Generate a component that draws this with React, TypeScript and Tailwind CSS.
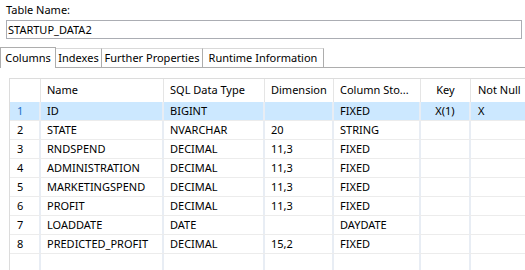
const columns = [
  { id: 1, name: 'ID', type: 'BIGINT', dim: '', store: 'FIXED', key: 'X(1)', notNull: 'X' },
  { id: 2, name: 'STATE', type: 'NVARCHAR', dim: '20', store: 'STRING', key: '', notNull: '' },
  { id: 3, name: 'RNDSPEND', type: 'DECIMAL', dim: '11,3', store: 'FIXED', key: '', notNull: '' },
  { id: 4, name: 'ADMINISTRATION', type: 'DECIMAL', dim: '11,3', store: 'FIXED', key: '', notNull: '' },
  { id: 5, name: 'MARKETINGSPEND', type: 'DECIMAL', dim: '11,3', store: 'FIXED', key: '', notNull: '' },
  { id: 6, name: 'PROFIT', type: 'DECIMAL', dim: '11,3', store: 'FIXED', key: '', notNull: '' },
  { id: 7, name: 'LOADDATE', type: 'DATE', dim: '', store: 'DAYDATE', key: '', notNull: '' },
  { id: 8, name: 'PREDICTED_PROFIT', type: 'DECIMAL', dim: '15,2', store: 'FIXED', key: '', notNull: '' },
];

const tabs = [
  { label: 'Columns', w: 'w-[56px]' },
  { label: 'Indexes', w: 'w-[46px]' },
  { label: 'Further Properties', w: 'w-[101px]' },
  { label: 'Runtime Information', w: 'w-[121px]' },
];

const grid = 'grid grid-cols-[31px_123px_101px_69px_87px_50px_1fr]';

const App = () => {
  return (
    <div
      className="w-[525px] h-[270px] overflow-hidden bg-white text-[11px] text-black"
      style={{ fontFamily: "'Noto Sans', sans-serif" }}
    >
      {/* Table name */}
      <div className="pl-[6px] pt-[2px] h-[20px] leading-[16px]">Table Name:</div>
      <div className="ml-[6px] mr-[3px] h-[19px] border border-[#abadb3] pl-[1px] leading-[17px]">
        STARTUP_DATA2
      </div>

      {/* Tabs */}
      <div className="mt-[8px] flex items-end h-[21px] border-b border-[#adadad]">
        {tabs.map((tab, i) =>
          i === 0 ? (
            <div
              key={tab.label}
              className={`${tab.w} h-[21px] -mb-px border-l border-t border-r border-[#adadad] bg-white leading-[19px] text-center`}
            >
              {tab.label}
            </div>
          ) : (
            <div
              key={tab.label}
              className={`${tab.w} h-[19px] border-t border-r border-[#d9d9d9] border-r-[#adadad] leading-[18px] text-center`}
            >
              {tab.label}
            </div>
          )
        )}
      </div>

      {/* Columns table */}
      <div className="ml-[9px] mt-[10px] border-l border-t border-[#dcdcdc]">
        <div className={`${grid} h-[23px] leading-[22px]`}>
          <div className="border-r border-[#e5e5e5]" />
          <div className="pl-[6px] border-r border-[#e5e5e5]">Name</div>
          <div className="pl-[6px] border-r border-[#e5e5e5]">SQL Data Type</div>
          <div className="pl-[6px] border-r border-[#e5e5e5]">Dimension</div>
          <div className="pl-[6px] border-r border-[#e5e5e5]">Column Sto...</div>
          <div className="text-center border-r border-[#e5e5e5]">Key</div>
          <div className="pl-[7px]">Not Null</div>
        </div>
        {columns.map((c) => {
          const sel = c.id === 1;
          return (
            <div
              key={c.id}
              className={`${grid} h-[19px] leading-[18px] border-b border-[#ececec] ${sel ? 'bg-[#cce8ff]' : ''}`}
            >
              <div className={`pl-[7px] border-r-2 border-[#e8edf4] ${sel ? 'text-[#1e6fc8]' : ''}`}>{c.id}</div>
              <div className="pl-[6px] border-r-2 border-[#e8edf4]">{c.name}</div>
              <div className="pl-[6px] border-r-2 border-[#e8edf4]">{c.type}</div>
              <div className="pl-[6px] border-r-2 border-[#e8edf4]">{c.dim}</div>
              <div className="pl-[6px] border-r-2 border-[#e8edf4]">{c.store}</div>
              <div className="text-center border-r-2 border-[#e8edf4]">{c.key}</div>
              <div className="pl-[7px]">{c.notNull}</div>
            </div>
          );
        })}
        <div className={`${grid} h-[19px] border-b border-[#ececec]`}>
          <div className="border-r-2 border-[#e8edf4]" />
          <div className="border-r-2 border-[#e8edf4]" />
          <div className="border-r-2 border-[#e8edf4]" />
          <div className="border-r-2 border-[#e8edf4]" />
          <div className="border-r-2 border-[#e8edf4]" />
          <div className="border-r-2 border-[#e8edf4]" />
          <div />
        </div>
      </div>
    </div>
  );
};

export default App;
